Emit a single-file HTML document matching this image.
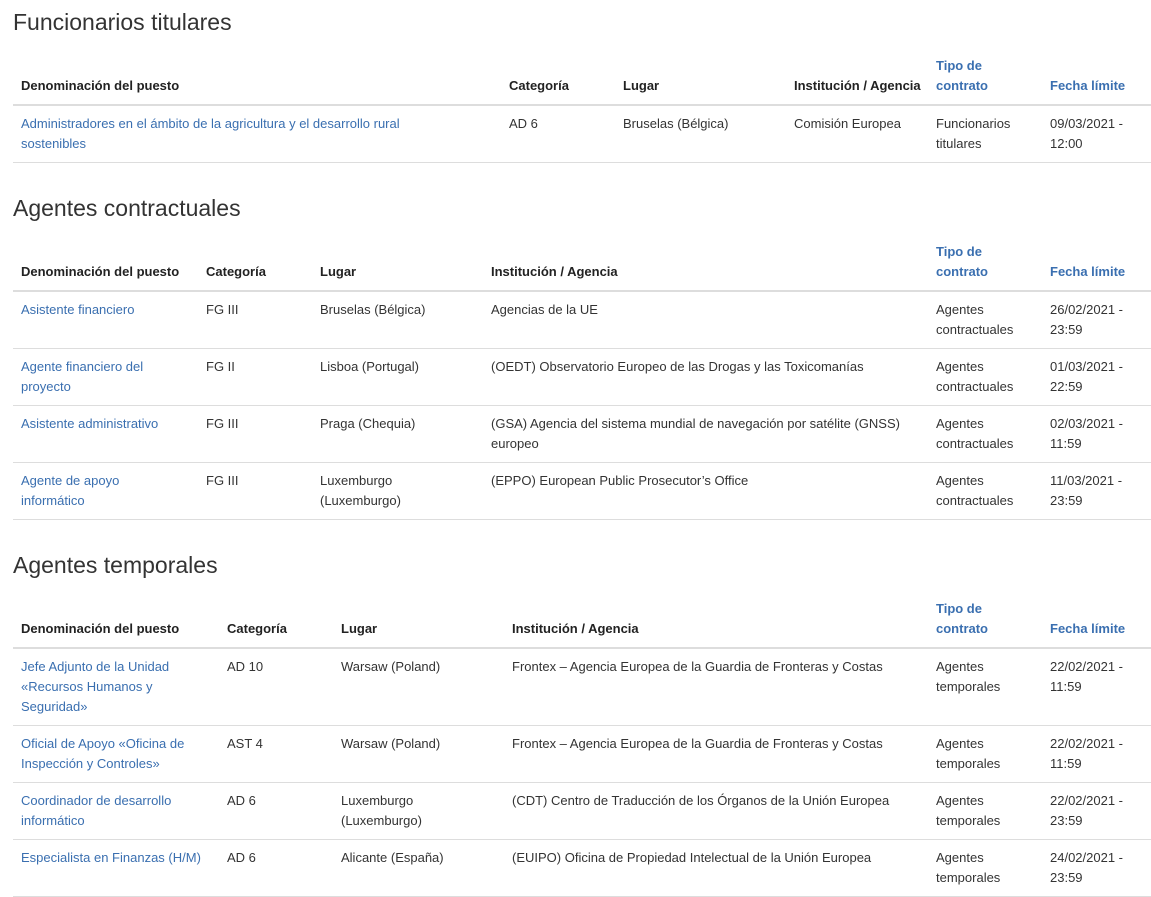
<!DOCTYPE html>
<html><head><meta charset="utf-8"><style>
body{margin:0;background:#fff;font-family:"Liberation Sans",sans-serif;color:#333;width:1151px;height:896px;overflow:hidden}
h2{font-weight:normal;font-size:23px;line-height:30px;margin:0;padding-left:13px;color:#333}
table{border-collapse:collapse;table-layout:fixed;margin-left:13px;width:1138px}
td,th{padding:8px 8px 8px 8px;font-size:13px;line-height:20px;vertical-align:top;text-align:left;white-space:nowrap}
th{vertical-align:bottom;font-weight:bold;color:#222;border-bottom:2px solid #ddd}
th.b{color:#3a6fb0}
tbody tr{border-bottom:1px solid #ddd}
a{color:#3a6fb0;text-decoration:none}
</style></head><body>
<div style="height:7px"></div>
<h2>Funcionarios titulares</h2>
<div style="height:11px"></div>
<table>
<colgroup><col style="width:488px"><col style="width:114px"><col style="width:171px"><col style="width:142px"><col style="width:114px"><col style="width:109px"></colgroup>
<thead><tr><th>Denominación del puesto</th><th>Categoría</th><th>Lugar</th><th>Institución / Agencia</th><th class="b">Tipo de<br>contrato</th><th class="b">Fecha límite</th></tr></thead>
<tbody>
<tr><td><a>Administradores en el ámbito de la agricultura y el desarrollo rural<br>sostenibles</a></td><td>AD 6</td><td>Bruselas (Bélgica)</td><td>Comisión Europea</td><td>Funcionarios<br>titulares</td><td>09/03/2021 -<br>12:00</td></tr>
</tbody></table>
<div style="height:30px"></div>
<h2>Agentes contractuales</h2>
<div style="height:11px"></div>
<table>
<colgroup><col style="width:185px"><col style="width:114px"><col style="width:171px"><col style="width:445px"><col style="width:114px"><col style="width:109px"></colgroup>
<thead><tr><th>Denominación del puesto</th><th>Categoría</th><th>Lugar</th><th>Institución / Agencia</th><th class="b">Tipo de<br>contrato</th><th class="b">Fecha límite</th></tr></thead>
<tbody>
<tr><td><a>Asistente financiero</a></td><td>FG III</td><td>Bruselas (Bélgica)</td><td>Agencias de la UE</td><td>Agentes<br>contractuales</td><td>26/02/2021 -<br>23:59</td></tr>
<tr><td><a>Agente financiero del<br>proyecto</a></td><td>FG II</td><td>Lisboa (Portugal)</td><td>(OEDT) Observatorio Europeo de las Drogas y las Toxicomanías</td><td>Agentes<br>contractuales</td><td>01/03/2021 -<br>22:59</td></tr>
<tr><td><a>Asistente administrativo</a></td><td>FG III</td><td>Praga (Chequia)</td><td>(GSA) Agencia del sistema mundial de navegación por satélite (GNSS)<br>europeo</td><td>Agentes<br>contractuales</td><td>02/03/2021 -<br>11:59</td></tr>
<tr><td><a>Agente de apoyo<br>informático</a></td><td>FG III</td><td>Luxemburgo<br>(Luxemburgo)</td><td>(EPPO) European Public Prosecutor’s Office</td><td>Agentes<br>contractuales</td><td>11/03/2021 -<br>23:59</td></tr>
</tbody></table>
<div style="height:30px"></div>
<h2>Agentes temporales</h2>
<div style="height:11px"></div>
<table>
<colgroup><col style="width:206px"><col style="width:114px"><col style="width:171px"><col style="width:424px"><col style="width:114px"><col style="width:109px"></colgroup>
<thead><tr><th>Denominación del puesto</th><th>Categoría</th><th>Lugar</th><th>Institución / Agencia</th><th class="b">Tipo de<br>contrato</th><th class="b">Fecha límite</th></tr></thead>
<tbody>
<tr><td><a>Jefe Adjunto de la Unidad<br>«Recursos Humanos y<br>Seguridad»</a></td><td>AD 10</td><td>Warsaw (Poland)</td><td>Frontex – Agencia Europea de la Guardia de Fronteras y Costas</td><td>Agentes<br>temporales</td><td>22/02/2021 -<br>11:59</td></tr>
<tr><td><a>Oficial de Apoyo «Oficina de<br>Inspección y Controles»</a></td><td>AST 4</td><td>Warsaw (Poland)</td><td>Frontex – Agencia Europea de la Guardia de Fronteras y Costas</td><td>Agentes<br>temporales</td><td>22/02/2021 -<br>11:59</td></tr>
<tr><td><a>Coordinador de desarrollo<br>informático</a></td><td>AD 6</td><td>Luxemburgo<br>(Luxemburgo)</td><td>(CDT) Centro de Traducción de los Órganos de la Unión Europea</td><td>Agentes<br>temporales</td><td>22/02/2021 -<br>23:59</td></tr>
<tr><td><a>Especialista en Finanzas (H/M)</a></td><td>AD 6</td><td>Alicante (España)</td><td>(EUIPO) Oficina de Propiedad Intelectual de la Unión Europea</td><td>Agentes<br>temporales</td><td>24/02/2021 -<br>23:59</td></tr>
</tbody></table>
</body></html>
